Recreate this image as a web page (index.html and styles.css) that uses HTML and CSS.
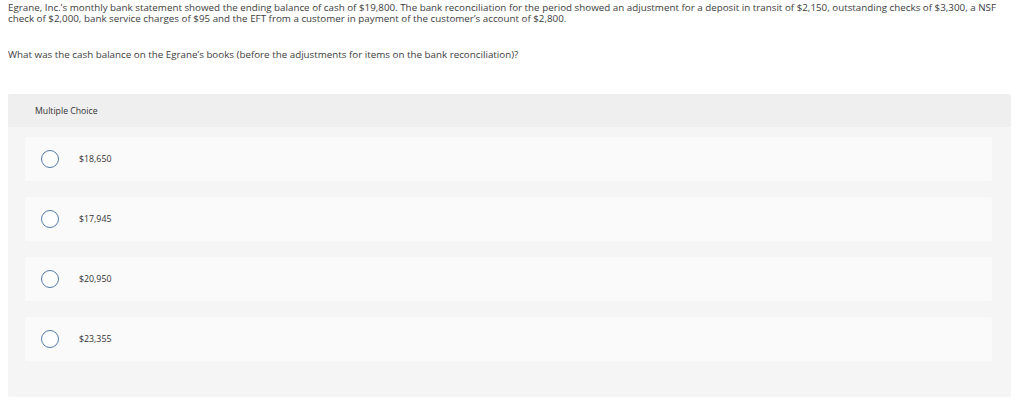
FILE: index.html
```html
<!DOCTYPE html>
<html>
<head>
<meta charset="utf-8">
<link rel="stylesheet" href="styles.css">
</head>
<body>
<div class="question">
  <p class="para">Egrane, Inc.’s monthly bank statement showed the ending balance of cash of $19,800. The bank reconciliation for the period showed an adjustment for a deposit in transit of $2,150, outstanding checks of $3,300, a NSF<br>check of $2,000, bank service charges of $95 and the EFT from a customer in payment of the customer’s account of $2,800.</p>
  <p class="para">What was the cash balance on the Egrane’s books (before the adjustments for items on the bank reconciliation)?</p>
</div>
<div class="panel">
  <div class="panel-head">Multiple Choice</div>
  <div class="options">
    <div class="option"><span class="radio"></span><span class="label">$18,650</span></div>
    <div class="option"><span class="radio"></span><span class="label">$17,945</span></div>
    <div class="option"><span class="radio"></span><span class="label">$20,950</span></div>
    <div class="option"><span class="radio"></span><span class="label">$23,355</span></div>
  </div>
</div>
</body>
</html>
```
FILE: styles.css
```css
html, body {
  margin: 0;
  padding: 0;
  background: #ffffff;
}
body {
  padding: 0 13px 0 8px;
  font-family: "Open Sans", "Liberation Sans", sans-serif;
  color: #3d3d3d;
}
.question {
  padding-top: 2px;
}
.para {
  margin: 0 0 25px 0;
  font-size: 9.8px;
  line-height: 11px;
  white-space: nowrap;
}
.para:last-child {
  margin-bottom: 0;
}
.panel {
  margin-top: 34px;
  background: #f5f5f5;
  border-radius: 2px;
  padding-bottom: 36px;
}
.panel-head {
  background: #efefef;
  height: 33px;
  display: flex;
  align-items: center;
  padding-left: 27px;
  font-size: 8.7px;
  color: #333;
  border-radius: 2px 2px 0 0;
}
.options {
  display: flex;
  flex-direction: column;
  gap: 16px;
  padding: 10px 19px 0 17px;
}
.option {
  height: 44px;
  background: #fafafa;
  display: flex;
  align-items: center;
  padding-left: 16px;
  border-radius: 2px;
}
.radio {
  width: 18px;
  height: 18px;
  border: 1px solid #5479ab;
  border-radius: 50%;
  box-sizing: border-box;
  background: #fff;
  flex: none;
}
.label {
  margin-left: 20px;
  font-size: 8.8px;
  color: #333;
}
```
